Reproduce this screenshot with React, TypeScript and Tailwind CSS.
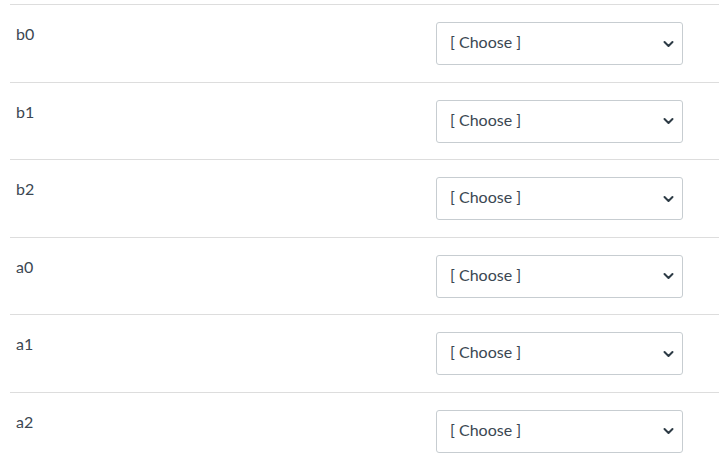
const rows = ["b0", "b1", "b2", "a0", "a1", "a2"];

const Chevron = () => (
	<svg
		className="pointer-events-none absolute right-[9px] top-1/2 -translate-y-1/2"
		width="11"
		height="8"
		viewBox="0 0 11 8"
		fill="none"
	>
		<path d="M1.5 2l4 4 4-4" stroke="#2d3b45" strokeWidth="2" strokeLinecap="round" strokeLinejoin="round" />
	</svg>
);

export default function App() {
	return (
		<div className="min-h-[466px] bg-white pl-[10px] pt-[4px] font-['Lato','Liberation_Sans',sans-serif] text-[#3b4752]">
			{rows.map((r) => (
				<div key={r} className="flex h-[77.6px] items-start border-t border-[#ddd]">
					<div className="w-[426px] pl-[6px] pt-[19px] text-[16px] leading-[20px]">{r}</div>
					<div className="relative mt-[17px]">
						<select
							className="h-[43px] w-[247px] appearance-none rounded-[3px] border border-[#c7cdd1] bg-white pb-[3px] pl-[13px] text-[16px] text-[#3b4752] outline-none"
							defaultValue=""
						>
							<option value="">[ Choose ]</option>
						</select>
						<Chevron />
					</div>
				</div>
			))}
		</div>
	);
}
